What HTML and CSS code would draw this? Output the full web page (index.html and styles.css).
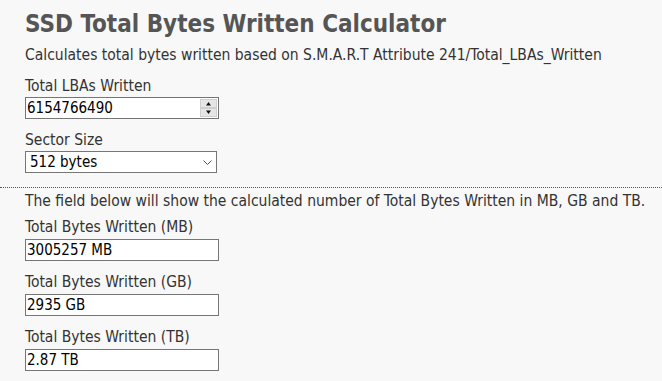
FILE: index.html
```html
<!DOCTYPE html>
<html lang="en">
  <head>
    <meta charset="UTF-8">
    <meta name="viewport" content="width=device-width, initial-scale=1.0">
    <title>SSD Total Bytes Written Calculator</title>
    <link rel="stylesheet" href="styles.css">
  </head>
  <body>
    <h1>SSD Total Bytes Written Calculator</h1>
    <p class="intro">Calculates total bytes written based on S.M.A.R.T Attribute 241/Total_LBAs_Written</p>

    <div class="field first">
      <label for="lbas">Total LBAs Written</label>
      <div class="wrap">
        <input type="number" id="lbas" class="box" value="6154766490">
        <svg class="spin" width="17" height="18" viewBox="0 0 17 18">
          <rect x="0.5" y="0.5" width="16" height="8" fill="#e6e6e6" stroke="#d0d0d0"/>
          <rect x="0.5" y="9.5" width="16" height="8" fill="#e6e6e6" stroke="#d0d0d0"/>
          <path d="M6 6.5 L11 6.5 L8.5 3 Z" fill="#111"/>
          <path d="M6 11.5 L11 11.5 L8.5 15 Z" fill="#111"/>
        </svg>
      </div>
    </div>

    <div class="field second">
      <label for="sector">Sector Size</label>
      <div class="wrap">
        <select id="sector" class="box select">
          <option value="512">512 bytes</option>
          <option value="4096">4096 bytes</option>
        </select>
        <svg class="chev" width="9" height="6" viewBox="0 0 9 6">
          <path d="M0.5 0.5 L4.5 4.5 L8.5 0.5" fill="none" stroke="#555" stroke-width="1"/>
        </svg>
      </div>
    </div>

    <p class="note">The field below will show the calculated number of Total Bytes Written in MB, GB and TB.</p>

    <div class="field result mb">
      <label for="mb">Total Bytes Written (MB)</label>
      <input type="text" id="mb" class="box" value="3005257 MB" readonly>
    </div>
    <div class="field result">
      <label for="gb">Total Bytes Written (GB)</label>
      <input type="text" id="gb" class="box" value="2935 GB" readonly>
    </div>
    <div class="field result">
      <label for="tb">Total Bytes Written (TB)</label>
      <input type="text" id="tb" class="box" value="2.87 TB" readonly>
    </div>
  </body>
</html>
```

FILE: styles.css
```css
body {
  font-family: 'DejaVu Sans Condensed', 'DejaVu Sans', sans-serif;
  font-size: 15.5px;
  color: #333;
  background-color: #f8f8f8;
  margin: 0;
  padding: 0 0 0 25px;
  overflow: hidden;
}

h1 {
  font-size: 24px;
  color: #555;
  margin: 9px 0 0 0;
  line-height: 30px;
}

.intro {
  margin: 7px 0 0 0;
  line-height: 18px;
}

.field label {
  display: block;
  line-height: 18px;
}

.field.first {
  margin-top: 13px;
}

.field.second {
  margin-top: 12px;
}

.field.result {
  margin-top: 12px;
}

.field.mb {
  margin-top: 8px;
}

.wrap {
  position: relative;
  width: 194px;
}

.box {
  display: block;
  box-sizing: border-box;
  width: 194px;
  height: 22px;
  margin: 2px 0 0 0;
  padding: 0 1px;
  border: 1px solid #767676;
  border-radius: 0;
  background: #fff;
  font-family: inherit;
  font-size: 15px;
  color: #000;
  outline: none;
}

.field.result .box {
  margin-top: 3px;
}

input[type=number] {
  -moz-appearance: textfield;
}

input[type=number]::-webkit-inner-spin-button,
input[type=number]::-webkit-outer-spin-button {
  -webkit-appearance: none;
  margin: 0;
}

.spin {
  position: absolute;
  right: 2px;
  top: 2px;
}

.select {
  -webkit-appearance: none;
  appearance: none;
  width: 192px;
  margin-top: 2px;
  padding: 0 4px;
}

.chev {
  position: absolute;
  left: 178px;
  top: 9px;
}

.note {
  margin: 14px 0 0 -25px;
  padding: 4px 0 0 25px;
  border-top: 1px dotted #555;
  line-height: 18px;
}
```
